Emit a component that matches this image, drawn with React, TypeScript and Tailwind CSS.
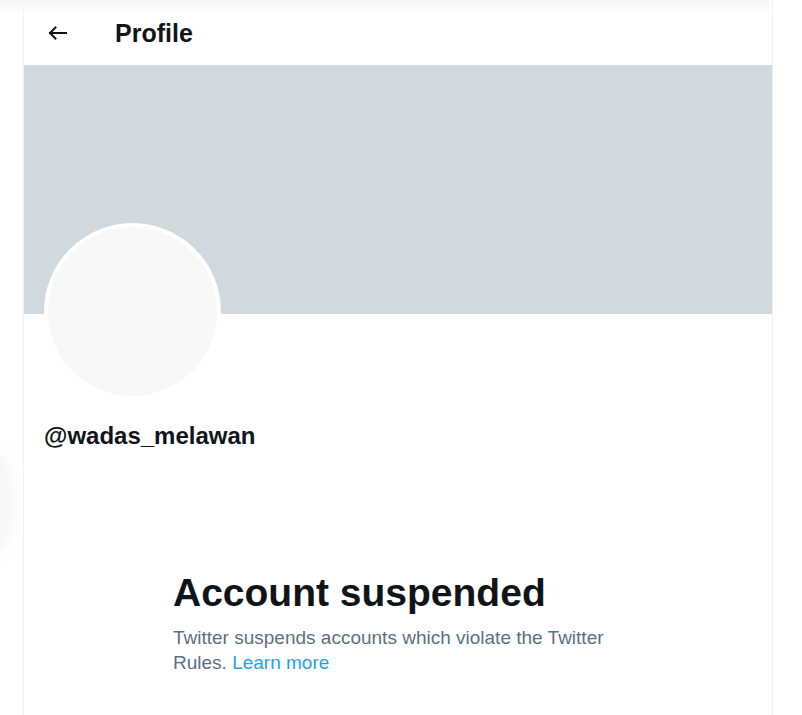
import React from "react";

export default function App() {
  return (
    <div
      className="relative w-[802px] h-[715px] overflow-hidden bg-white"
      style={{ fontFamily: '"Liberation Sans", Arial, sans-serif' }}
    >
      {/* faint top band */}
      <div className="absolute left-0 top-0 w-[770px] h-[14px] bg-gradient-to-b from-[#f6f6f6] to-white/0 z-20" />
      {/* faint left blob */}
      <div className="absolute left-[-60px] top-[445px] w-[72px] h-[115px] rounded-[36px] bg-[#f4f4f4] blur-[6px] opacity-70" />

      <div className="ml-[23px] w-[750px] h-full border-x border-[#eff3f4] flex flex-col">
        {/* header */}
        <div className="h-[65px] flex items-center shrink-0">
          <div className="w-[91px] pl-[24px] flex items-center">
            <svg width="19" height="14" viewBox="0 0 19 14" fill="none" className="text-[#0f1419]">
              <path d="M18.5 7H2M7.5 1.5L2 7l5.5 5.5" stroke="currentColor" strokeWidth="2" strokeLinecap="square" />
            </svg>
          </div>
          <div className="text-[25px] leading-[30px] font-bold text-[#0f1419]">Profile</div>
        </div>

        {/* banner */}
        <div className="h-[249px] bg-[#cfd9de] shrink-0" />

        {/* avatar */}
        <div className="px-[20px] mt-[-91px] shrink-0">
          <div className="w-[177px] h-[177px] rounded-full bg-white p-[4px]">
            <div className="w-full h-full rounded-full bg-[#f7f9f9]" />
          </div>
        </div>

        {/* handle */}
        <div className="px-[20px] mt-[21px] text-[24px] leading-[30px] font-bold text-[#0f1419]">
          @wadas_melawan
        </div>

        {/* suspended */}
        <div className="mt-[119px] pl-[149px]">
          <div className="w-[450px]">
            <h1 className="text-[39px] leading-[45px] font-bold text-[#0f1419]">Account suspended</h1>
            <p className="mt-[10px] text-[19px] leading-[25px] text-[#5b7083]">
              Twitter suspends accounts which violate the Twitter Rules.{" "}
              <a className="text-[#1da1f2]">Learn more</a>
            </p>
          </div>
        </div>
      </div>
    </div>
  );
}
